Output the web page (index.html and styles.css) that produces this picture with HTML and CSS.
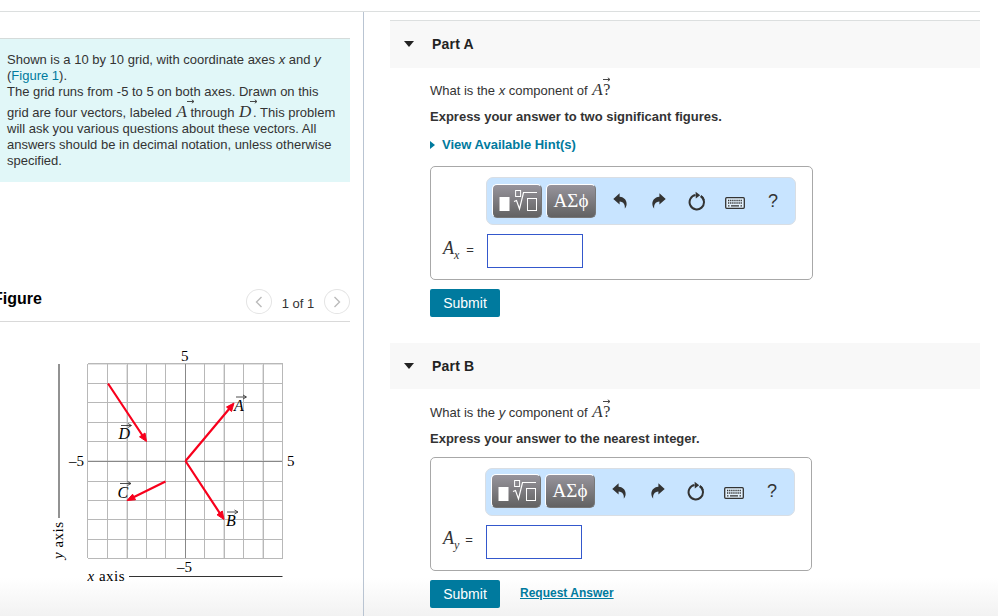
FILE: index.html
```html
<!DOCTYPE html>
<html lang="en">
<head>
    <meta charset="UTF-8">
    <meta name="viewport" content="width=device-width, initial-scale=1.0">
    <title>Vector Components</title>
    <link rel="stylesheet" href="styles.css">
</head>
<body>
    <!-- Shared icons -->
    <svg class="sprite" width="0" height="0">
        <symbol id="arrow" viewBox="0 0 8 5">
            <path d="M0 2.5H6.5M4.8 0.8L7 2.5L4.8 4.2" fill="none" stroke="#333" stroke-width="0.9"/>
        </symbol>
        <symbol id="root" viewBox="0 0 50 34">
            <rect x="7.5" y="13" width="10" height="14" fill="#fff"/>
            <rect x="23.6" y="6.5" width="5" height="6" fill="none" stroke="#fff"/>
            <path d="M22 17.500l2.500-1l3 8.500L31.500 8.500H45" fill="none" stroke="#fff" stroke-width="1.2"/>
            <rect x="35.5" y="14.5" width="9" height="12" fill="none" stroke="#fff"/>
        </symbol>
        <symbol id="undo" viewBox="0 0 14 16">
            <path d="M0.3 6L6.6 0.3V3.7C11.5 4.2 14 7.5 13.6 11.5C13.4 13.2 12.8 14.6 11.8 15.6C12.2 11.5 10.7 8.6 6.6 8.4V11.6Z" fill="#333"/>
        </symbol>
        <symbol id="reset" viewBox="0 0 18 20">
            <path d="M12.8 5.2A7.2 7.2 0 1 1 7.5 4.1" fill="none" stroke="#333" stroke-width="2"/>
            <path d="M7.6 0.8L12.2 4.2L7.8 7.6Z" fill="#333"/>
            <path d="M12.8 5.2A7.2 7.2 0 0 1 15.8 9" fill="none" stroke="#333" stroke-width="2"/>
        </symbol>
        <symbol id="keyboard" viewBox="0 0 20 12">
            <rect x="0.7" y="0.7" width="18.6" height="10.6" rx="1" fill="#e2f0fc" stroke="#333" stroke-width="1.3"/>
            <path d="M3 3.5H17M3 6H17" stroke="#333" stroke-width="1.3" stroke-dasharray="1.3 0.8"/>
            <path d="M3 8.8H4.5M6 8.8H14M15.5 8.8H17" stroke="#333" stroke-width="1.2"/>
        </symbol>
    </svg>

    <div class="page">
        <div class="left">
            <div class="problem">
                Shown is a 10 by 10 grid, with coordinate axes <i>x</i> and <i>y</i><br>
                (<a href="#figure">Figure 1</a>).<br>
                The grid runs from -5 to 5 on both axes. Drawn on this<br>
                <span class="tall">grid are four vectors, labeled <span class="vec">A<svg><use href="#arrow"/></svg></span>through <span class="vec vec-d">D<svg><use href="#arrow"/></svg></span>. This problem</span><br>
                will ask you various questions about these vectors. All<br>
                answers should be in decimal notation, unless otherwise<br>
                specified.
            </div>

            <div class="figure-head" id="figure">
                <h2>Figure</h2>
                <div class="pager">
                    <button class="round"><svg width="8" height="12" viewBox="0 0 8 12"><path d="M6.5 1L1.5 6L6.5 11"/></svg></button>
                    <span>1 of 1</span>
                    <button class="round"><svg width="8" height="12" viewBox="0 0 8 12"><path d="M1.5 1L6.5 6L1.5 11"/></svg></button>
                </div>
            </div>

            <svg class="graph" width="350" height="260" viewBox="0 0 350 260">
                <!-- Grid -->
                <path class="wide" d="M127 24V218M224 24V218M263 24V218M88 24H282M88 121H282"/>
                <path class="thin" d="M87.500 24V218M107.500 24V218M127.500 24V218M146.500 24V218M165.500 24V218M204.500 24V218M224.500 24V218M243.500 24V218M263.500 24V218M282.500 24V218"/>
                <path class="thin" d="M88 23.500H283M88 43.500H283M88 62.500H283M88 82.500H283M88 101.500H283M88 141.500H283M88 160.500H283M88 179.500H283M88 199.500H283M88 218.500H283"/>
                <path class="axis" d="M185.500 24V218M88 121.500H282"/>
                <!-- Axis rules -->
                <path d="M59 24V178" stroke="#777" stroke-width="1.6"/>
                <path d="M129 236.500H282.500" stroke="#333"/>
                <!-- Vectors -->
                <g class="vectors">
                    <path d="M185.500 121L229.500 68.500M185.500 121L220 173.500M165.500 141.500L133 157.500M108 43.500L142.500 95.500"/>
                    <path class="tip" d="M234 63L231.500 71.500L226.500 67Z"/>
                    <path class="tip" d="M224 179.500L217 174.800L222.300 171Z"/>
                    <path class="tip" d="M127 160.500L132.600 154.200L135.500 159.800Z"/>
                    <path class="tip" d="M146.500 101.500L139.500 96.800L145 93Z"/>
                </g>
                <!-- Labels -->
                <path class="over" d="M236 57H246M243 55L246.500 57L243 59M227 172H237.500M234.500 170L238 172L234.500 174M120 143.500H130.500M127.500 141.500L131 143.500L127.500 145.500M121 85.500H131M128 83.500L131.500 85.500L128 87.500"/>
                <g class="names">
                    <text x="234" y="70.500">A</text>
                    <text x="226" y="185.500">B</text>
                    <text x="117.500" y="158">C</text>
                    <text x="118.500" y="98.500">D</text>
                </g>
                <text x="181" y="20.500">5</text>
                <text x="287" y="126">5</text>
                <text x="69" y="126">–5</text>
                <text x="177" y="231.500">–5</text>
                <text class="axis-name" x="87.500" y="240.500"><tspan font-style="italic">x</tspan> axis</text>
                <text class="axis-name" x="0" y="0" transform="translate(63 219) rotate(-90)"><tspan font-style="italic">y</tspan> axis</text>
            </svg>
        </div>

        <div class="right">
            <!-- Part A -->
            <div class="part-head first"><span class="caret"></span>Part A</div>
            <div class="part-body">
                <p class="question">What is the <i>x</i> component of <span class="vec">A<svg><use href="#arrow"/></svg></span><span class="mark">?</span></p>
                <p class="express">Express your answer to two significant figures.</p>
                <a class="hints" href="#"><span></span>View Available Hint(s)</a>
                <div class="answer">
                    <div class="toolbar">
                        <button class="tool"><svg width="50" height="34"><use href="#root"/></svg></button>
                        <button class="tool">ΑΣϕ</button>
                        <svg class="undo"><use href="#undo"/></svg>
                        <svg class="redo"><use href="#undo"/></svg>
                        <svg class="reset"><use href="#reset"/></svg>
                        <svg class="keyboard"><use href="#keyboard"/></svg>
                        <span class="help">?</span>
                    </div>
                    <div class="entry">
                        <label for="ax"><i>A</i><sub>x</sub><b>=</b></label>
                        <input type="text" id="ax">
                    </div>
                </div>
                <div class="actions"><button class="submit">Submit</button></div>
            </div>

            <!-- Part B -->
            <div class="part-head"><span class="caret"></span>Part B</div>
            <div class="part-body part-b">
                <p class="question">What is the <i>y</i> component of <span class="vec">A<svg><use href="#arrow"/></svg></span><span class="mark">?</span></p>
                <p class="express">Express your answer to the nearest integer.</p>
                <div class="answer answer-b">
                    <div class="toolbar">
                        <button class="tool"><svg width="50" height="34"><use href="#root"/></svg></button>
                        <button class="tool">ΑΣϕ</button>
                        <svg class="undo"><use href="#undo"/></svg>
                        <svg class="redo"><use href="#undo"/></svg>
                        <svg class="reset"><use href="#reset"/></svg>
                        <svg class="keyboard"><use href="#keyboard"/></svg>
                        <span class="help">?</span>
                    </div>
                    <div class="entry">
                        <label for="ay"><i>A</i><sub>y</sub><b>=</b></label>
                        <input type="text" id="ay">
                    </div>
                </div>
                <div class="actions">
                    <button class="submit">Submit</button>
                    <a class="request" href="#">Request Answer</a>
                </div>
            </div>
        </div>
    </div>
</body>
</html>
```
FILE: styles.css
```css
* {
    box-sizing: border-box;
}

body {
    margin: 0;
    height: 616px;
    overflow: hidden;
    font-family: "Liberation Sans", Arial, sans-serif;
    font-size: 13px;
    line-height: 16px;
    color: #333;
    background: linear-gradient(#fff 578px, #f2f2f2 616px);
}

.sprite {
    display: block;
}

a {
    color: #007a9e;
    text-decoration: none;
}

h2,
p {
    margin: 0;
}

button {
    padding: 0;
    border: none;
    font-family: inherit;
}

.page {
    display: flex;
    width: 980px;
    height: 605px;
    margin-top: 11px;
    border-top: 1px solid #dcdfdf;
}

.left {
    width: 364px;
    flex-shrink: 0;
    padding-top: 26px;
    border-right: 1px solid #b9c4d2;
}

.problem {
    width: 350px;
    height: 144px;
    padding: 13px 0 0 7px;
    border-top: 1px solid #d5dbda;
    background-color: #e1f7f8;
    white-space: nowrap;
}

.tall {
    display: inline-block;
    height: 21px;
    padding-top: 5px;
}

.vec {
    position: relative;
    display: inline-block;
    width: 11px;
    margin: 0 3px 0 1px;
    font: italic 17px/10px "Liberation Serif", serif;
}

.vec svg {
    position: absolute;
    left: 11px;
    top: -8px;
    width: 8px;
    height: 5px;
}

.vec-d {
    width: 13px;
    margin: 0 1px 0 1px;
}

/* Figure */
.figure-head {
    display: flex;
    justify-content: space-between;
    width: 350px;
    height: 40px;
    margin-top: 100px;
    border-bottom: 1px solid #d9d9d9;
}

.figure-head h2 {
    margin: 8px 0 0 -7px;
    font-size: 16px;
    line-height: 18px;
    color: #000;
}

.pager {
    display: flex;
    align-items: center;
    height: 25px;
    margin-top: 7px;
}

.pager span {
    width: 52px;
    padding-top: 5px;
    text-align: center;
}

.round {
    display: flex;
    align-items: center;
    justify-content: center;
    width: 26px;
    height: 25px;
    border: 1px solid #e4e4e4;
    border-radius: 50%;
    background: #fff;
}

.round path {
    fill: none;
    stroke: #bbb;
    stroke-width: 1.4;
}

.graph {
    display: block;
    margin-top: 18px;
    font-family: "Liberation Serif", serif;
    font-size: 15px;
    fill: #000;
}

.wide {
    stroke: #e2e2e2;
    stroke-width: 2;
}

.thin {
    stroke: #b8b8b8;
}

.axis {
    stroke: #888;
}

.vectors {
    fill: none;
    stroke: #f8001c;
    stroke-width: 2.2;
}

.tip {
    fill: #f8001c;
    stroke-width: 1;
}

.over {
    fill: none;
    stroke: #222;
    stroke-width: 0.8;
}

.names {
    font-style: italic;
    font-size: 16px;
}

.axis-name {
    font-size: 15px;
    letter-spacing: 0.5px;
}

/* Parts */
.right {
    width: 590px;
    margin-left: 26px;
    padding-top: 8px;
    flex-shrink: 0;
}

.part-head {
    display: flex;
    align-items: center;
    height: 46px;
    padding-left: 14px;
    background-color: #f8f8f8;
    font-size: 14px;
    font-weight: bold;
    letter-spacing: 0.2px;
    color: #222;
}

.part-head.first {
    height: 48px;
    padding-bottom: 2px;
    border-top: 1px solid #dcdfdf;
}

.caret {
    margin-right: 18px;
    border: 5px solid transparent;
    border-top: 6px solid #222;
    border-bottom: none;
}

.part-body {
    padding: 15px 0 0 40px;
}

.part-b {
    padding-top: 16px;
}

.part-body .vec {
    margin: 0 0 0 1px;
}

.question {
    height: 16px;
    white-space: nowrap;
}

.mark {
    font-family: "Liberation Serif", serif;
    font-size: 16px;
    line-height: 10px;
}

.express {
    margin-top: 10px;
    font-weight: bold;
}

.hints {
    display: flex;
    align-items: center;
    margin-top: 12px;
    font-weight: bold;
}

.hints span {
    margin-right: 7px;
    border: 4px solid transparent;
    border-left: 5px solid #007a9e;
    border-right: none;
}

.answer {
    width: 383px;
    height: 114px;
    margin-top: 13px;
    padding: 10px 0 0 55px;
    border: 1px solid #a8a8a8;
    border-radius: 5px;
    background: #fff;
}

.answer-b {
    width: 382px;
    margin-top: 10px;
    padding-left: 54px;
}

.toolbar {
    display: flex;
    align-items: flex-start;
    width: 310px;
    height: 48px;
    padding: 6px 0 0 5px;
    border: 1px solid #d9dee4;
    border-radius: 7px;
    background-color: #c8e4ff;
}

.answer-b .toolbar {
    padding-top: 5px;
}

.tool {
    width: 50px;
    height: 34px;
    margin-right: 4px;
    border: 1px solid #777;
    border-top: 1px solid #fff;
    border-left: 1px solid #fff;
    border-radius: 5px;
    background: linear-gradient(#97949c, #626262);
    color: #fff;
    font: 19px/30px "Liberation Serif", serif;
}

.tool svg {
    display: block;
    margin: -1px;
}

.undo,
.redo {
    width: 14px;
    height: 16px;
    margin: 9px 0 0 13px;
}

.redo {
    margin-left: 25px;
    transform: scaleX(-1);
}

.reset {
    width: 18px;
    height: 20px;
    margin: 7px 0 0 22px;
}

.keyboard {
    width: 20px;
    height: 12px;
    margin: 13px 0 0 19px;
}

.help {
    margin: 8px 0 0 23px;
    font-size: 18px;
    line-height: 19px;
}

.entry {
    display: flex;
    margin: 9px 0 0 -43px;
}

.answer-b .entry {
    margin-left: -42px;
}

.entry label {
    width: 44px;
    height: 34px;
    font: 18px/28px "Liberation Serif", serif;
    white-space: nowrap;
}

.answer-b .entry label {
    width: 43px;
    line-height: 26px;
}

.entry sub {
    font-size: 12px;
    font-style: italic;
    line-height: 1px;
}

.entry b {
    margin-left: 7px;
    font: 13px/28px "Liberation Sans", sans-serif;
}

.answer-b .entry b {
    margin-left: 6px;
}

.entry input {
    width: 96px;
    height: 34px;
    border: 1px solid #3458cc;
    background: #fff;
}

.actions {
    display: flex;
    align-items: flex-start;
    height: 63px;
    padding-top: 9px;
}

.submit {
    width: 70px;
    height: 28px;
    border-radius: 2px;
    background-color: #007a9e;
    color: #fff;
    font-size: 14px;
}

.request {
    margin: 5px 0 0 20px;
    font-size: 12px;
    font-weight: bold;
    text-decoration: underline;
}
```
